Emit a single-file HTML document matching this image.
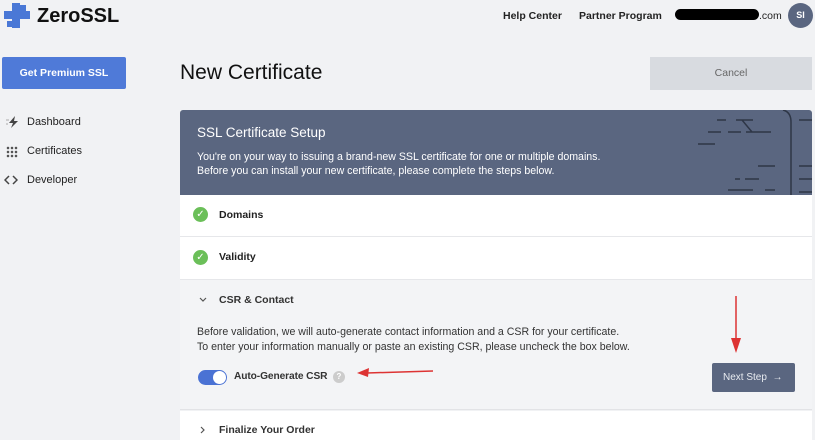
<!DOCTYPE html>
<html><head><style>
*{margin:0;padding:0;box-sizing:border-box}
body{width:815px;height:440px;overflow:hidden;background:#f1f2f4;font-family:"Liberation Sans",sans-serif;color:#222;position:relative}
.a{position:absolute}
.b{font-weight:bold}
</style></head><body>
<svg class="a" style="left:4px;top:3px" width="27" height="25" viewBox="0 0 27 25">
<rect x="8" y="0" width="8" height="25" fill="#4a78d6"/><rect x="0" y="8" width="26" height="8" fill="#4a78d6"/><rect x="16" y="2" width="6" height="6" fill="#4a78d6"/><rect x="3" y="18" width="5" height="6" fill="#4a78d6"/>
</svg>
<div class="a b" style="left:37px;top:5px;font-size:20px;color:#111">ZeroSSL</div>
<div class="a b" style="left:503px;top:10px;font-size:10.5px">Help Center</div>
<div class="a b" style="left:579px;top:10px;font-size:10.5px">Partner Program</div>
<div class="a" style="left:675px;top:9px;width:84px;height:11px;background:#000;border-radius:6px"></div>
<div class="a" style="left:759px;top:10px;font-size:10.5px">.com</div>
<div class="a b" style="left:788px;top:3px;width:25px;height:25px;border-radius:50%;background:#5a6680;color:#fff;font-size:9px;line-height:25px;text-align:center">SI</div>
<div class="a b" style="left:2px;top:57px;width:124px;height:32px;background:#4f7ad8;border-radius:2px;color:#fff;font-size:10.5px;line-height:32px;text-align:center">Get Premium SSL</div>
<svg class="a" style="left:6px;top:115px" width="14" height="14"><path d="M9 1 L3 8 H7 L5 13 L12 6 H8 Z" fill="#444"/><path d="M0 5h3M0 9h2" stroke="#aaa"/></svg>
<div class="a" style="left:27px;top:116px;font-size:11px">Dashboard</div>
<div class="a" style="left:6px;top:146px;width:12px;height:12px;background:radial-gradient(circle,#555 1.2px,transparent 1.4px) 0 0/4px 4px"></div>
<div class="a" style="left:27px;top:145px;font-size:11px">Certificates</div>
<svg class="a" style="left:4px;top:175px" width="14" height="10" fill="none" stroke="#444" stroke-width="1.5"><path d="M5 1 L1 5 L5 9M9 1 L13 5 L9 9"/></svg>
<div class="a" style="left:27px;top:174px;font-size:11px">Developer</div>
<div class="a" style="left:180px;top:61px;font-size:21px;color:#111">New Certificate</div>
<div class="a" style="left:650px;top:57px;width:162px;height:33px;background:#d8dbe0;color:#666;font-size:10.5px;line-height:33px;text-align:center">Cancel</div>
<div class="a" style="left:180px;top:110px;width:632px;height:85px;background:#5a6680;border-radius:3px 3px 0 0"></div>
<div class="a" style="left:197px;top:125px;font-size:13.5px;color:#fff">SSL Certificate Setup</div>
<div class="a" style="left:197px;top:150px;font-size:10.6px;color:#fff;line-height:14px">You're on your way to issuing a brand-new SSL certificate for one or multiple domains.<br>Before you can install your new certificate, please complete the steps below.</div>
<svg class="a" style="left:680px;top:110px" width="132" height="85" stroke="#2e3646" stroke-width="1.5" fill="none">
<path d="M103 0 q8 2 8 12 V85"/><path d="M37 10h9M56 10h17M62 10l10 12M28 22h13M48 22h13M66 22h25M18 34h17M78 56h17M55 69h5M65 69h14M48 80h25M85 80h10M119 10h13M119 56h13M119 69h13M119 82h13"/>
</svg>
<div class="a" style="left:180px;top:195px;width:632px;height:42px;background:#fff;border-bottom:1px solid #e6e7ea"></div>
<div class="a" style="left:180px;top:237px;width:632px;height:43px;background:#fff;border-bottom:1px solid #e6e7ea"></div>
<div class="a" style="left:193px;top:207px;width:15px;height:15px;border-radius:50%;background:#6bbf59;color:#fff;font-size:10px;line-height:15px;text-align:center">✓</div>
<div class="a b" style="left:219px;top:209px;font-size:10.5px">Domains</div>
<div class="a" style="left:193px;top:250px;width:15px;height:15px;border-radius:50%;background:#6bbf59;color:#fff;font-size:10px;line-height:15px;text-align:center">✓</div>
<div class="a b" style="left:219px;top:251px;font-size:10.5px">Validity</div>
<div class="a" style="left:180px;top:280px;width:632px;height:130px;background:#f3f4f6;border-bottom:1px solid #e2e3e6"></div>
<svg class="a" style="left:199px;top:297px" width="8" height="6" fill="none" stroke="#555" stroke-width="1.2"><path d="M1 1 L4 4 L7 1"/></svg>
<div class="a b" style="left:219px;top:294px;font-size:10.5px;color:#333">CSR &amp; Contact</div>
<div class="a" style="left:197px;top:325px;font-size:10.6px;color:#333;line-height:15px">Before validation, we will auto-generate contact information and a CSR for your certificate.<br>To enter your information manually or paste an existing CSR, please uncheck the box below.</div>
<div class="a" style="left:198px;top:370px;width:29px;height:15px;border-radius:8px;background:#4a72d4"></div>
<div class="a" style="left:213px;top:371px;width:13px;height:13px;border-radius:50%;background:#fff"></div>
<div class="a b" style="left:234px;top:371px;font-size:10.2px;color:#333;letter-spacing:-0.1px">Auto-Generate CSR</div>
<div class="a b" style="left:333px;top:371px;width:12px;height:12px;border-radius:50%;background:#ccc;color:#fff;font-size:8px;line-height:12px;text-align:center">?</div>
<svg class="a" style="left:355px;top:365px" width="80" height="14"><path d="M78 6 L12 8" stroke="#d33" stroke-width="1.5"/><path d="M2 8 L14 3 L13 12Z" fill="#d33"/></svg>
<svg class="a" style="left:729px;top:296px" width="14" height="58"><path d="M7 0 V45" stroke="#d33" stroke-width="1.5"/><path d="M2 42 L12 42 L7 57Z" fill="#d33"/></svg>
<div class="a" style="left:712px;top:363px;width:83px;height:29px;background:#5a6680;border-radius:2px;color:#e8ebf0;font-size:10px;line-height:29px;padding-left:11px">Next Step &nbsp;→</div>
<div class="a" style="left:180px;top:411px;width:632px;height:29px;background:#fff"></div>
<svg class="a" style="left:200px;top:426px" width="6" height="8" fill="none" stroke="#555" stroke-width="1.2"><path d="M1 1 L4 4 L1 7"/></svg>
<div class="a b" style="left:219px;top:424px;font-size:10.5px;color:#333">Finalize Your Order</div>
</body></html>
